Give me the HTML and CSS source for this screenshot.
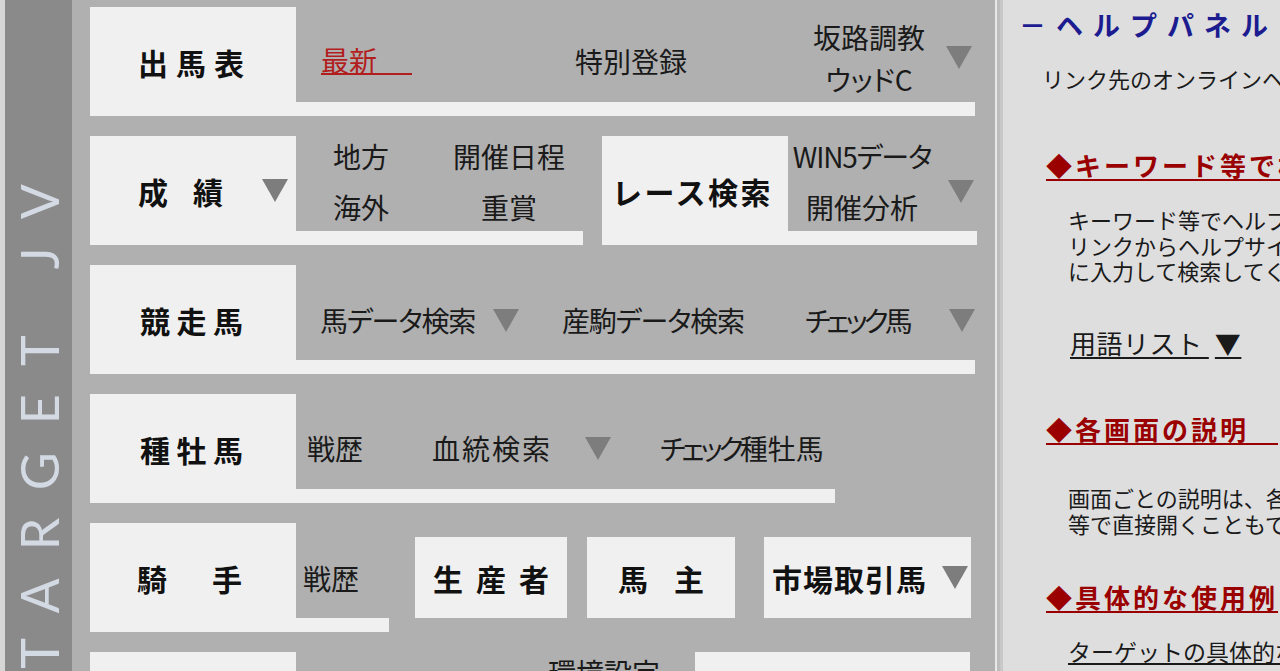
FILE: index.html
```html
<!DOCTYPE html>
<html lang="ja">
<head>
<meta charset="utf-8">
<title>TARGET JV</title>
<link rel="stylesheet" href="styles.css">
</head>
<body>
<div class="app">
  <aside class="side"><div class="logo">TARGET JV</div></aside>

  <main class="main">
    <div class="row">
      <div class="card c885">
        <div class="label lab ls8">出馬表</div>
        <div class="sub r1">
          <a class="new">最新</a>
          <span class="ml163">特別登録</span>
          <div class="stack1"><span>坂路調教</span><span>ウッドC</span></div>
          <i class="tri t1"></i>
        </div>
      </div>
    </div>

    <div class="row">
      <div class="card c493">
        <div class="label lab"><span class="ls25">成績</span><i class="tri t2"></i></div>
        <div class="sub r2">
          <div class="grid2">
            <span>地方</span><span>開催日程</span>
            <span>海外</span><span>重賞</span>
          </div>
        </div>
      </div>
      <div class="card c375 ml19">
        <div class="label labr ls2">レース検索</div>
        <div class="sub r2b">
          <div class="stack2"><span class="tight">WIN5データ</span><span>開催分析</span></div>
          <i class="tri t3"></i>
        </div>
      </div>
    </div>

    <div class="row">
      <div class="card c885">
        <div class="label lab2 ls6">競走馬</div>
        <div class="sub r3">
          <span class="it w151 tight">馬データ検索</span>
          <i class="tri ml22"></i>
          <span class="it w180 ml43 tight">産駒データ検索</span>
          <span class="it w101 ml63"><span class="kana">チェック</span>馬</span>
          <i class="tri ml43"></i>
        </div>
      </div>
    </div>

    <div class="row">
      <div class="card c745">
        <div class="label lab2 ls6">種牡馬</div>
        <div class="sub r4">
          <span class="it w60">戦歴</span>
          <span class="it w123 ml65 wide">血統検索</span>
          <i class="tri ml30"></i>
          <span class="it ml49"><span class="kana">チェック</span>種牡馬</span>
        </div>
      </div>
    </div>

    <div class="row">
      <div class="card c299">
        <div class="label lab3 ls45">騎手</div>
        <div class="sub r5"><span>戦歴</span></div>
      </div>
      <div class="btn b1">生産者</div>
      <div class="btn b2">馬主</div>
      <div class="btn b3"><span>市場取引馬</span><i class="tri ml15"></i></div>
    </div>

    <div class="row">
      <div class="card c206"><div class="label lab"></div></div>
      <span class="env">環境設定</span>
      <div class="wbox"></div>
    </div>
  </main>

  <div class="divider"></div>

  <section class="help">
    <div class="h-title">－ヘルプパネル－</div>
    <p class="h-intro">リンク先のオンラインヘルプを参照できます。</p>
    <p class="h-head h1">◆キーワード等で検索</p>
    <p class="h-para p1">キーワード等でヘルプを検索する場合は、<br>リンクからヘルプサイトを開き、検索欄<br>に入力して検索してください。</p>
    <p class="h-link">用語リスト <span class="arrow">▼</span></p>
    <p class="h-head h2">◆各画面の説明　</p>
    <p class="h-para p2">画面ごとの説明は、各画面のヘルプボタン<br>等で直接開くこともできます。</p>
    <p class="h-head h3">◆具体的な使用例</p>
    <p class="h-link2">ターゲットの具体的な使用例</p>
  </section>
</div>
</body>
</html>
```

FILE: styles.css
```css
* { box-sizing: border-box; margin: 0; padding: 0; }
html, body { width: 1280px; height: 671px; overflow: hidden; background: #b0b0b0; }
body { font-family: "Noto Sans CJK JP", "Noto Sans", sans-serif; color: #161616; }

.app { display: flex; width: 1280px; height: 671px; }

/* left vertical strip */
.side {
  width: 72px; flex: none; background: #8a8a8a; border-left: 5px solid #d6d6d6;
  display: flex; flex-direction: column; justify-content: flex-end; align-items: center;
  overflow: hidden;
}
.logo {
  writing-mode: vertical-rl; transform: rotate(180deg);
  font-family: Lato, "DejaVu Sans", sans-serif; font-weight: 400;
  font-size: 52px; letter-spacing: 28px; line-height: 1;
  color: #d3dae3; white-space: nowrap; margin-bottom: 2px;
}

/* main panel */
.main {
  width: 923px; flex: none; padding: 7px 0 0 18px;
  display: flex; flex-direction: column; gap: 20px; overflow: hidden;
}
.row { display: flex; align-items: flex-start; flex: none; }
.card { display: flex; align-items: flex-start; background: #f0f0f0; height: 109px; flex: none; }
.c885 { width: 885px; }
.c493 { width: 493px; }
.c375 { width: 375px; }
.c745 { width: 745px; }
.c299 { width: 299px; }
.c206 { width: 206px; }

.label {
  height: 109px; flex: none; display: flex; align-items: center;
  font-weight: 700; font-size: 30px; line-height: 1; white-space: nowrap; color: #111;
}
.lab { width: 206px; padding-left: 48px; }
.lab2 { width: 206px; padding-left: 50px; }
.lab3 { width: 206px; padding-left: 47px; }
.labr { width: 186px; padding-left: 10px; }
.ls8 { letter-spacing: 8px; }
.ls6 { letter-spacing: 6.5px; }
.ls25 { letter-spacing: 25px; }
.ls45 { letter-spacing: 45px; }
.ls2 { letter-spacing: 2.5px; }

.sub {
  flex: 1; height: 95px; background: #b0b0b0; display: flex; align-items: center;
  font-size: 28px; line-height: 1; white-space: nowrap; font-feature-settings: "palt";
  color: #1a1a1a;
}
.it { flex: none; display: block; }
.tight { letter-spacing: -1.2px; }
.wide { letter-spacing: 2px; }
.kana { letter-spacing: -4px; }
.w151 { width: 151px; }
.w180 { width: 180px; }
.w101 { width: 101px; }
.w60 { width: 60px; }
.w123 { width: 123px; }

.tri {
  display: block; flex: none; width: 0; height: 0;
  border-left: 13px solid transparent; border-right: 13px solid transparent;
  border-top: 23px solid #7d7d7d;
}

/* row 1 */
.r1 { padding: 13px 0 0 25px; }
.new {
  display: inline-block; width: 91px; color: #b21e1e;
  border-bottom: 2px solid #b21e1e; line-height: 26px;
}
.ml163 { margin-left: 163px; }
.stack1 {
  display: flex; flex-direction: column; align-items: center;
  width: 114px; margin-left: 125px; margin-top: -6px; line-height: 42px;
}
.t1 { margin-left: 20px; margin-top: -7px; }

/* row 2 */
.t2 { margin-left: 14px; }
.r2 { align-items: flex-start; padding-left: 35px; }
.grid2 {
  display: grid; grid-template-columns: 60px 114px; column-gap: 61px; row-gap: 11px;
  line-height: 40px; text-align: center;
}
.ml19 { margin-left: 19px; }
.r2b { align-items: flex-start; }
.stack2 {
  display: grid; row-gap: 11px; line-height: 40px; width: 148px; text-align: center;
}
.t3 { margin-left: 12px; margin-top: 44px; }

/* row 3 */
.r3 { padding: 15px 0 0 24px; }
.ml22 { margin-left: 22px; }
.ml43 { margin-left: 43px; }
.ml63 { margin-left: 63px; }

/* row 4 */
.r4 { padding: 13px 0 0 11px; }
.ml65 { margin-left: 65px; }
.ml30 { margin-left: 30px; }
.ml49 { margin-left: 49px; }

/* row 5 */
.r5 { padding: 15px 0 0 7px; }
.btn {
  height: 81px; margin-top: 14px; flex: none; background: #f0f0f0;
  display: flex; align-items: center; justify-content: center;
  font-weight: 700; font-size: 30px; line-height: 1; white-space: nowrap; color: #111;
}
.b1 { width: 152px; margin-left: 26px; letter-spacing: 13px; padding-left: 13px; }
.b2 { width: 148px; margin-left: 20px; letter-spacing: 26px; padding-left: 26px; }
.b3 { width: 207px; margin-left: 29px; justify-content: flex-start; padding-left: 8px; letter-spacing: 1px; }
.ml15 { margin-left: 15px; }

/* row 6 */
.env {
  font-size: 28px; line-height: 28px; margin: 6px 0 0 252px; white-space: nowrap;
  font-feature-settings: "palt"; color: #1a1a1a;
}
.wbox { width: 275px; height: 81px; background: #f0f0f0; margin-left: 35px; flex: none; }

/* divider */
.divider {
  width: 8px; flex: none; background: #bdbdbd;
  border-left: 2px solid #e8e8e8; border-right: 3px solid #c8c8c8;
}

/* help panel */
.help {
  width: 277px; flex: none; background: #dedede; overflow: hidden;
  padding-top: 8px; white-space: nowrap; color: #1a1a1a;
}
.h-title {
  font-size: 27px; font-weight: 700; color: #1c1c90; letter-spacing: 10px;
  line-height: 34px; padding-left: 16px;
}
.h-intro { font-size: 22px; line-height: 26px; margin-top: 23px; padding-left: 39px; }
.h-head {
  font-size: 26px; font-weight: 700; color: #9a0000; line-height: 30px;
  padding-left: 43px; letter-spacing: 3px; white-space: pre;
  text-decoration: underline; text-decoration-thickness: 2px; text-underline-offset: 3px;
}
.h1 { margin-top: 59px; }
.h2 { margin-top: 56px; }
.h3 { margin-top: 46px; }
.h-para { font-size: 22px; line-height: 25.5px; padding-left: 65px; }
.p1 { margin-top: 27px; }
.p2 { margin-top: 40px; line-height: 26px; }
.h-link {
  font-size: 26px; line-height: 30px; padding-left: 67px; margin-top: 44px;
  letter-spacing: 0.5px; white-space: pre;
  text-decoration: underline; text-decoration-thickness: 2px; text-underline-offset: 3px;
}
.arrow { margin-left: 6px; }
.h-link2 {
  font-size: 23px; line-height: 26px; padding-left: 65px; margin-top: 26px;
  text-decoration: underline; text-decoration-thickness: 2px; text-underline-offset: 2px;
}
```
